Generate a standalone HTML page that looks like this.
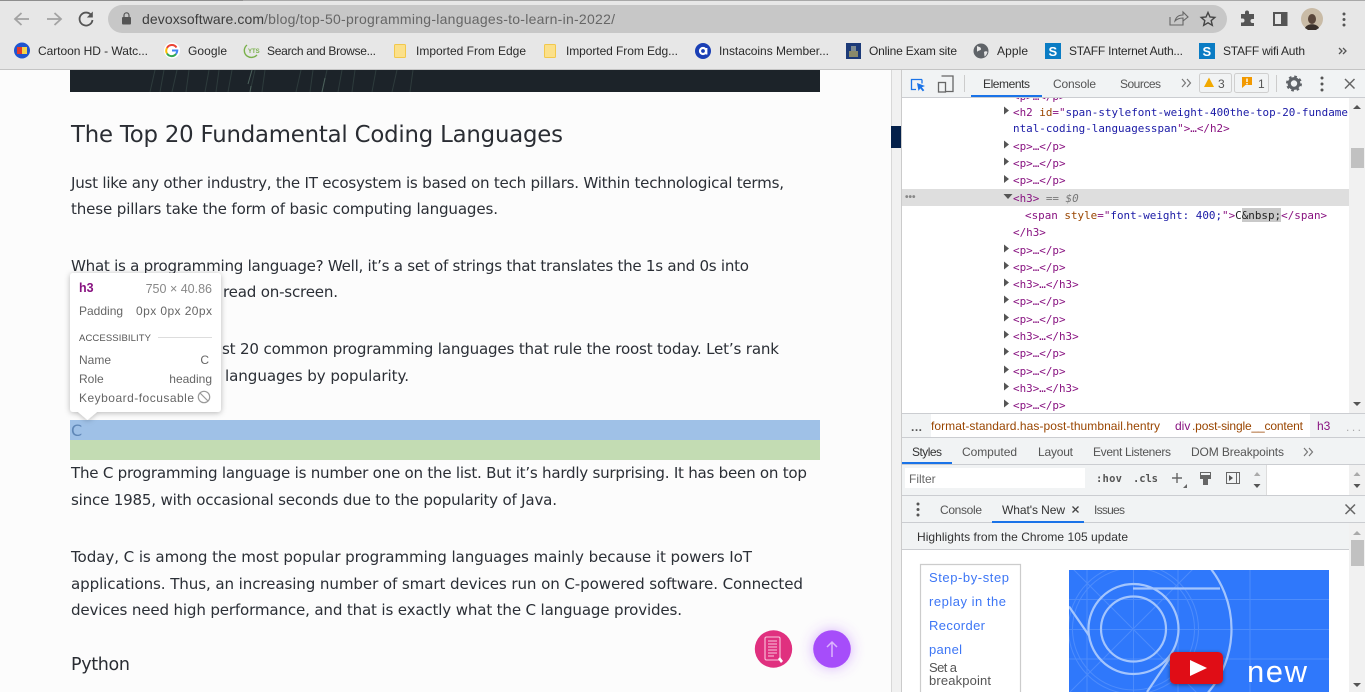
<!DOCTYPE html>
<html lang="en"><head><meta charset="utf-8"><title>DevTools</title>
<style>
html,body{margin:0;padding:0;width:1365px;height:692px;overflow:hidden;background:#fcfcfc}
svg{display:block;position:absolute;left:0;top:0;overflow:hidden}
text{font-family:"Liberation Sans",Arial,sans-serif;white-space:pre}
.p{font-family:"DejaVu Sans",sans-serif;font-size:15.1px;fill:#2b2f36}
.h{font-family:"DejaVu Sans",sans-serif;fill:#2a2d33}
.b{font-size:12px;fill:#2a2a2a}
.t{font-size:12px;fill:#555}
.m{font-family:"DejaVu Sans Mono",monospace;font-size:10.91px;fill:#881280}
.a{fill:#994500}.v{fill:#1a1aa6}.k{fill:#222}.g{fill:#777;font-style:italic}
.tt{font-size:12px;fill:#666}
</style></head><body>
<svg width="1365" height="692" viewBox="0 0 1365 692" xmlns="http://www.w3.org/2000/svg">
<defs>
<filter id="sh" x="-20%" y="-20%" width="140%" height="140%"><feDropShadow dx="0" dy="1" stdDeviation="3" flood-color="#000" flood-opacity=".28"/></filter>
<filter id="gl" x="-60%" y="-60%" width="220%" height="220%"><feDropShadow dx="0" dy="0" stdDeviation="7" flood-color="#a64dfa" flood-opacity=".45"/></filter>
<filter id="sh2" x="-20%" y="-20%" width="140%" height="140%"><feDropShadow dx="0" dy="1" stdDeviation="2" flood-color="#111" flood-opacity=".45"/></filter>
<clipPath id="elc"><rect x="902" y="98" width="447" height="314"/></clipPath>
<clipPath id="imgc"><rect x="1069" y="570" width="260" height="122"/></clipPath>
<clipPath id="topc"><rect x="70" y="70" width="750" height="22"/></clipPath>
<clipPath id="cardc"><rect x="915" y="560" width="110" height="132"/></clipPath>
</defs>

<!-- page -->
<rect x="0" y="70" width="891" height="622" fill="#fcfcfc"/>
<rect x="70" y="70" width="750" height="22" fill="#1c2329"/>
<g clip-path="url(#topc)" stroke-width="1" opacity=".5">
<path d="M150 92l5-22M160 92l4-22M172 92l5-22M186 92l3-22M205 92l4-22M216 92l3-22M228 92l4-22M250 92l5-22M262 92l3-22M296 92l5-22M310 92l3-22M322 92l5-22M338 92l4-22M352 92l3-22M372 92l4-22M392 92l5-22M410 92l3-22" stroke="#3f534f" fill="none"/>
<path d="M248 84l4-14M322 92l3-14M250 92l1-6" stroke="#7d9f8e" fill="none"/>
</g>

<text class="h" x="71" y="142" font-size="22.8" textLength="492" lengthAdjust="spacing">The Top 20 Fundamental Coding Languages</text>

<text class="p" x="71" y="188" textLength="713" lengthAdjust="spacing">Just like any other industry, the IT ecosystem is based on tech pillars. Within technological terms,</text>
<text class="p" x="71" y="214" textLength="427" lengthAdjust="spacing">these pillars take the form of basic computing languages.</text>
<text class="p" x="71" y="271" textLength="678" lengthAdjust="spacing">What is a programming language? Well, it’s a set of strings that translates the 1s and 0s into</text>
<text class="p" x="223" y="297" textLength="115" lengthAdjust="spacing">read on-screen.</text>
<text class="p" x="222" y="354" textLength="557" lengthAdjust="spacing">st 20 common programming languages that rule the roost today. Let’s rank</text>
<text class="p" x="225" y="381" textLength="184" lengthAdjust="spacing">languages by popularity.</text>

<rect x="70" y="420" width="750" height="20" fill="#9fc1e7"/>
<rect x="70" y="440" width="750" height="20" fill="#c3dcb3"/>
<text class="h" x="71" y="436" font-size="16" style="fill:#5f87b7">C</text>

<text class="p" x="71" y="478" textLength="736" lengthAdjust="spacing">The C programming language is number one on the list. But it’s hardly surprising. It has been on top</text>
<text class="p" x="71" y="505" textLength="486" lengthAdjust="spacing">since 1985, with occasional seconds due to the popularity of Java.</text>
<text class="p" x="71" y="562" textLength="681" lengthAdjust="spacing">Today, C is among the most popular programming languages mainly because it powers IoT</text>
<text class="p" x="71" y="589" textLength="732" lengthAdjust="spacing">applications. Thus, an increasing number of smart devices run on C-powered software. Connected</text>
<text class="p" x="71" y="615" textLength="611" lengthAdjust="spacing">devices need high performance, and that is exactly what the C language provides.</text>
<text class="h" x="71" y="670" font-size="17.5" textLength="59" lengthAdjust="spacing">Python</text>

<!-- tooltip -->
<g filter="url(#sh)"><rect x="70" y="273" width="151" height="139" rx="3" fill="#fff"/><path d="M78 412h19l-9.500 8z" fill="#fff"/></g>
<text x="79" y="292" font-size="12.5" font-weight="bold" fill="#881280">h3</text>
<text x="212" y="293" font-size="12.5" fill="#888" text-anchor="end">750 × 40.86</text>
<text x="79" y="315" class="tt">Padding</text>
<text x="212" y="315" class="tt" text-anchor="end" textLength="76" lengthAdjust="spacing">0px 0px 20px</text>
<text x="79" y="341" font-size="9.500" fill="#555" textLength="72" lengthAdjust="spacing">ACCESSIBILITY</text>
<rect x="158" y="337" width="54" height="1" fill="#ddd"/>
<text x="79" y="364" class="tt">Name</text><text x="209" y="364" class="tt" text-anchor="end">C</text>
<text x="79" y="383" class="tt">Role</text><text x="212" y="383" class="tt" text-anchor="end">heading</text>
<text x="79" y="402" class="tt" textLength="115" lengthAdjust="spacing">Keyboard-focusable</text>
<circle cx="204" cy="397" r="5.700" fill="none" stroke="#999" stroke-width="1.200"/><path d="M200 393l8 8" stroke="#999" stroke-width="1.200"/>

<!-- FABs -->
<circle cx="773.500" cy="649" r="18.700" fill="#e0307f"/>
<g fill="none" stroke="#f9c6dd" stroke-width="1.100">
<rect x="765" y="637" width="15" height="23" rx="1.500"/>
<path d="M768 641h9M768 644h9M768 647h9M768 650h9M768 653h9M768 656h6"/>
</g>
<path d="M780 657l3 4-2 2-3-4z" fill="#fff"/>
<circle cx="832" cy="649" r="18.800" fill="#a64dfa" filter="url(#gl)"/>
<path d="M832 657v-15M827 647l5-5 5 5" fill="none" stroke="#dcb5fd" stroke-width="1.500"/>

<!-- chrome top -->
<rect x="0" y="0" width="1365" height="70" fill="#e7e7e7"/>
<rect x="0" y="0" width="243" height="1" fill="#8e8e8e"/>
<rect x="243" y="0" width="1122" height="1" fill="#a8a8a8"/>
<rect x="0" y="69" width="1365" height="1" fill="#c4c4c4"/>
<rect x="108" y="5" width="1119" height="28" rx="14" fill="#c7c7c7"/>
<path d="M29 19H15.500M21.500 13l-6.500 6 6.500 6" fill="none" stroke="#a3a3a3" stroke-width="1.800"/>
<path d="M47 19h13.500M54.500 13l6.500 6-6.500 6" fill="none" stroke="#a3a3a3" stroke-width="1.800"/>
<path d="M91.500 15.500A6.500 6.500 0 1 0 92.500 20" fill="none" stroke="#555" stroke-width="1.800"/><path d="M92.800 11.500v6h-6z" fill="#555"/>
<rect x="122" y="17" width="9" height="7.500" rx="1" fill="#555"/><path d="M124 17v-1.700a2.500 2.500 0 0 1 5 0V17" fill="none" stroke="#555" stroke-width="1.200"/>
<text x="142" y="24" font-size="14" fill="#3c3c3c" textLength="122" lengthAdjust="spacing">devoxsoftware.com</text>
<text x="264" y="24" font-size="14" fill="#666" textLength="351" lengthAdjust="spacing">/blog/top-50-programming-languages-to-learn-in-2022/</text>
<path d="M1170 17v8h13v-4M1175 21c1-4 4-6 8-6v-3l5 5-5 4v-3c-3 0-6 1-8 3z" fill="none" stroke="#666" stroke-width="1.100"/>
<path d="M1208 12.500l2 4.500 4.800.4-3.600 3.200 1.100 4.700-4.300-2.500-4.300 2.500 1.100-4.700-3.600-3.200 4.800-.4z" fill="none" stroke="#444" stroke-width="1.400"/>
<path d="M1241 14h4v-1.500a2 2 0 0 1 4 0V14h5v5h-1.500a2 2 0 0 0 0 4H1254v3h-13v-3.500h1.500a2 2 0 0 0 0-4H1241z" fill="#555"/>
<rect x="1274" y="13" width="12.500" height="12" fill="#e7e7e7" stroke="#555" stroke-width="2"/><rect x="1281" y="13" width="5.500" height="12" fill="#555"/>
<circle cx="1312" cy="19" r="11" fill="#c9bba6"/><ellipse cx="1312" cy="19" rx="4" ry="5" fill="#5a463a"/><path d="M1305 28c2-5 12-5 14 0l-3 2h-8z" fill="#3a302a"/>
<circle cx="1344" cy="14" r="1.500" fill="#555"/><circle cx="1344" cy="19.500" r="1.500" fill="#555"/><circle cx="1344" cy="25" r="1.500" fill="#555"/>

<!-- bookmarks -->
<circle cx="22" cy="50.500" r="8" fill="#1f55d0"/><rect x="17" y="47" width="5" height="7" fill="#e03a2f"/><rect x="22" y="47" width="5" height="7" fill="#f3d54a"/>
<text class="b" x="38" y="55" textLength="110" lengthAdjust="spacing">Cartoon HD - Watc...</text>
<circle cx="172" cy="50.500" r="8" fill="#fff"/>
<path d="M176.500 47.500A5.500 5.500 0 0 0 167 48" fill="none" stroke="#ea4335" stroke-width="2"/><path d="M167 48a5.500 5.500 0 0 0 0 5.500" fill="none" stroke="#fbbc05" stroke-width="2"/><path d="M167 53.500a5.500 5.500 0 0 0 9 .5" fill="none" stroke="#34a853" stroke-width="2"/><path d="M172 50.500h5.300a5.500 5.500 0 0 1-1.300 3.500" fill="none" stroke="#4285f4" stroke-width="2"/>
<text class="b" x="188" y="55" textLength="39" lengthAdjust="spacing">Google</text>
<path d="M247 45a7 7 0 0 0 0 11c3 2 7 2 10-1" fill="none" stroke="#79b04a" stroke-width="1.400"/><text x="248" y="53" font-size="6" font-weight="bold" fill="#79b04a">YTS</text>
<text class="b" x="267" y="55" textLength="109" lengthAdjust="spacing">Search and Browse...</text>
<rect x="394.500" y="44.500" width="11" height="13" rx="1" fill="#fbe08a" stroke="#f2c84b"/>
<text class="b" x="416" y="55" textLength="110" lengthAdjust="spacing">Imported From Edge</text>
<rect x="544.500" y="44.500" width="11" height="13" rx="1" fill="#fbe08a" stroke="#f2c84b"/>
<text class="b" x="566" y="55" textLength="112" lengthAdjust="spacing">Imported From Edg...</text>
<circle cx="703" cy="51" r="8" fill="#1a3fb5"/><circle cx="703" cy="51" r="3" fill="none" stroke="#fff" stroke-width="2.200"/><path d="M706.500 48v6.500" stroke="#fff" stroke-width="1.800"/>
<text class="b" x="719" y="55" textLength="110" lengthAdjust="spacing">Instacoins Member...</text>
<rect x="846" y="43" width="15" height="16" fill="#1c3a78"/><rect x="851" y="46" width="5" height="5" fill="#7d8a90"/><rect x="849" y="51" width="9" height="6" fill="#8a8a6a"/>
<text class="b" x="869" y="55" textLength="88" lengthAdjust="spacing">Online Exam site</text>
<circle cx="981" cy="51" r="7.500" fill="#5f6368"/><path d="M977 46c2 1 4 1 4 3s-3 1-4 3M984 52c1-1 3-1 3.500 0-1 3-2 4-3 4.500z" fill="#e7e7e7"/>
<text class="b" x="997" y="55" textLength="31" lengthAdjust="spacing">Apple</text>
<rect x="1045" y="43" width="16" height="16" fill="#0a7cc4"/><text x="1048.500" y="56" font-size="13" font-weight="bold" fill="#fff">S</text>
<text class="b" x="1069" y="55" textLength="114" lengthAdjust="spacing">STAFF Internet Auth...</text>
<rect x="1199" y="43" width="16" height="16" fill="#0a7cc4"/><text x="1202.500" y="56" font-size="13" font-weight="bold" fill="#fff">S</text>
<text class="b" x="1223" y="55" textLength="82" lengthAdjust="spacing">STAFF wifi Auth</text>
<path d="M1339 48l3 3-3 3M1343 48l3 3-3 3" fill="none" stroke="#555" stroke-width="1.300"/>

<!-- gutter -->
<rect x="891" y="70" width="11" height="622" fill="#f1f1f1"/>
<rect x="891" y="70" width="1" height="622" fill="#d8d8d8"/>
<rect x="901" y="70" width="1" height="622" fill="#cbcbcb"/>
<rect x="891" y="126" width="10" height="22" fill="#04204a"/>

<!-- devtools base -->
<rect x="902" y="70" width="463" height="622" fill="#fff"/>
<rect x="902" y="70" width="463" height="27" fill="#f1f3f4"/>
<rect x="902" y="97" width="463" height="1" fill="#cbcdd1"/>
<path d="M922 79.500h-10.500v10H916" fill="none" stroke="#1a73e8" stroke-width="1.300"/><path d="M922 79.500v4" stroke="#1a73e8" stroke-width="1.300"/>
<path d="M917 83l8 3-3.200 1.200 2.500 3-1.500 1.200-2.500-3-1.800 2.600z" fill="#1a73e8"/>
<path d="M941.500 76h11.500v15.500h-7" fill="none" stroke="#666" stroke-width="1.300"/><rect x="938.500" y="82.500" width="7" height="9.500" fill="none" stroke="#666" stroke-width="1.300"/>
<rect x="964" y="75" width="1" height="17" fill="#ccc"/>
<text class="t" x="983" y="88" textLength="47" lengthAdjust="spacing" style="fill:#333">Elements</text>
<rect x="971" y="95" width="71" height="2" fill="#1a73e8"/>
<text class="t" x="1053" y="88" textLength="43" lengthAdjust="spacing">Console</text>
<text class="t" x="1120" y="88" textLength="41" lengthAdjust="spacing">Sources</text>
<path d="M1182 79l3.500 4-3.500 4M1187 79l3.500 4-3.500 4" fill="none" stroke="#777" stroke-width="1.200"/>
<rect x="1199.500" y="73.500" width="32" height="19" rx="2" fill="#f1f3f4" stroke="#cfcfcf"/>
<path d="M1209 77.500l5 9.500h-10z" fill="#f2a900"/><text x="1218" y="88" font-size="12" fill="#555">3</text>
<rect x="1234.500" y="73.500" width="34" height="19" rx="2" fill="#f1f3f4" stroke="#cfcfcf"/>
<path d="M1242 77h10v8h-6.500l-3.500 3z" fill="#f29900"/><rect x="1246.300" y="78.500" width="1.400" height="3.500" fill="#fff"/><rect x="1246.300" y="83" width="1.400" height="1.400" fill="#fff"/>
<text x="1258" y="88" font-size="12" fill="#555">1</text>
<rect x="1276" y="75" width="1" height="17" fill="#ccc"/>
<circle cx="1294" cy="83.500" r="4.800" fill="none" stroke="#5f6368" stroke-width="3.200"/><circle cx="1294" cy="83.500" r="7" fill="none" stroke="#5f6368" stroke-width="2" stroke-dasharray="2.700 2.800"/>
<circle cx="1322" cy="78" r="1.500" fill="#555"/><circle cx="1322" cy="84" r="1.500" fill="#555"/><circle cx="1322" cy="90" r="1.500" fill="#555"/>
<path d="M1345 79l9.500 9.500M1354.500 79l-9.500 9.500" stroke="#666" stroke-width="1.500"/>

<!-- elements -->
<rect x="1349" y="98" width="16" height="315" fill="#f1f1f1"/>
<rect x="1351" y="148" width="13" height="20" fill="#c1c1c1"/>
<path d="M1353 109l4-4 4 4z" fill="#555"/><path d="M1353 402l4 4 4-4z" fill="#555"/>
<g clip-path="url(#elc)">
<rect x="902" y="189" width="447" height="17" fill="#dedede"/>
<rect x="1242" y="208" width="39" height="14" fill="#c9c9c9"/>
<text class="m" x="1013" y="100">&lt;p&gt;…&lt;/p&gt;</text>
<g fill="#555">
<path d="M1004 106.500l5 4-5 4zM1004 140.500l5 4-5 4zM1004 157.500l5 4-5 4zM1004 175l5 4-5 4zM1004 244.500l5 4-5 4zM1004 261.500l5 4-5 4zM1004 278.500l5 4-5 4zM1004 295.500l5 4-5 4zM1004 313.500l5 4-5 4zM1004 330.500l5 4-5 4zM1004 347.500l5 4-5 4zM1004 365.500l5 4-5 4zM1004 382.500l5 4-5 4zM1004 399.500l5 4-5 4z"/>
<path d="M1003.500 194h9l-4.500 5z"/>
</g>
<text class="m" x="1013" y="116">&lt;h2 <tspan class="a">id</tspan>="<tspan class="v">span-stylefont-weight-400the-top-20-fundame</tspan></text>
<text class="m" x="1013" y="132"><tspan class="v">ntal-coding-languagesspan</tspan>"&gt;…&lt;/h2&gt;</text>
<text class="m" x="1013" y="150">&lt;p&gt;…&lt;/p&gt;</text>
<text class="m" x="1013" y="167">&lt;p&gt;…&lt;/p&gt;</text>
<text class="m" x="1013" y="184">&lt;p&gt;…&lt;/p&gt;</text>
<text class="m" x="1013" y="202">&lt;h3&gt; <tspan class="g">== $0</tspan></text>
<text x="905" y="200" font-size="10" font-weight="bold" fill="#888">•••</text>
<text class="m" x="1025" y="219">&lt;span <tspan class="a">style</tspan>="<tspan class="v">font-weight: 400;</tspan>"&gt;<tspan class="k">C&amp;nbsp;</tspan>&lt;/span&gt;</text>
<text class="m" x="1013" y="236">&lt;/h3&gt;</text>
<text class="m" x="1013" y="254">&lt;p&gt;…&lt;/p&gt;</text>
<text class="m" x="1013" y="271">&lt;p&gt;…&lt;/p&gt;</text>
<text class="m" x="1013" y="288">&lt;h3&gt;…&lt;/h3&gt;</text>
<text class="m" x="1013" y="305">&lt;p&gt;…&lt;/p&gt;</text>
<text class="m" x="1013" y="323">&lt;p&gt;…&lt;/p&gt;</text>
<text class="m" x="1013" y="340">&lt;h3&gt;…&lt;/h3&gt;</text>
<text class="m" x="1013" y="357">&lt;p&gt;…&lt;/p&gt;</text>
<text class="m" x="1013" y="375">&lt;p&gt;…&lt;/p&gt;</text>
<text class="m" x="1013" y="392">&lt;h3&gt;…&lt;/h3&gt;</text>
<text class="m" x="1013" y="409">&lt;p&gt;…&lt;/p&gt;</text>
</g>

<!-- breadcrumb -->
<rect x="902" y="413" width="463" height="1" fill="#cbcdd1"/>
<rect x="902" y="414" width="29" height="23" fill="#f1f3f4"/>
<rect x="1310" y="414" width="55" height="23" fill="#f1f3f4"/>
<rect x="902" y="437" width="463" height="1" fill="#cbcdd1"/>
<text x="911" y="431" font-size="12" font-weight="bold" fill="#555" textLength="11" lengthAdjust="spacing">...</text>
<text x="931" y="430" font-size="12" fill="#994500" textLength="229" lengthAdjust="spacing">format-standard.has-post-thumbnail.hentry</text>
<text x="1175" y="430" font-size="12" fill="#881280">div</text>
<text x="1192" y="430" font-size="12" fill="#994500" textLength="111" lengthAdjust="spacing">.post-single__content</text>
<text x="1317" y="430" font-size="12" fill="#881280">h3</text>
<text x="1346" y="431" font-size="12" fill="#aaa" textLength="15" lengthAdjust="spacing">...</text>

<!-- styles tabs -->
<rect x="902" y="438" width="463" height="26" fill="#f1f3f4"/>
<rect x="902" y="464" width="463" height="1" fill="#cbcdd1"/>
<text class="t" x="912" y="456" textLength="30" lengthAdjust="spacing" style="fill:#333">Styles</text>
<rect x="902" y="462" width="50" height="2" fill="#1a73e8"/>
<text class="t" x="962" y="456" textLength="55" lengthAdjust="spacing">Computed</text>
<text class="t" x="1038" y="456" textLength="35" lengthAdjust="spacing">Layout</text>
<text class="t" x="1093" y="456" textLength="78" lengthAdjust="spacing">Event Listeners</text>
<text class="t" x="1191" y="456" textLength="93" lengthAdjust="spacing">DOM Breakpoints</text>
<path d="M1304 448l3.500 4-3.500 4M1309 448l3.500 4-3.500 4" fill="none" stroke="#777" stroke-width="1.200"/>

<!-- filter -->
<rect x="902" y="465" width="365" height="30" fill="#f1f3f4"/>
<rect x="905" y="468" width="180" height="20" fill="#fff"/>
<text x="909" y="483" font-size="12" fill="#666">Filter</text>
<text x="1096" y="482" font-size="10.500" font-weight="bold" fill="#555" style="font-family:'DejaVu Sans Mono',monospace" textLength="26" lengthAdjust="spacing">:hov</text>
<text x="1133" y="482" font-size="10.500" font-weight="bold" fill="#555" style="font-family:'DejaVu Sans Mono',monospace" textLength="25" lengthAdjust="spacing">.cls</text>
<path d="M1177 473v10M1172 478h10" stroke="#666" stroke-width="1.400"/><path d="M1187 488h-4l4-4z" fill="#666"/>
<rect x="1200" y="472" width="11" height="7" fill="#666"/><rect x="1201" y="473" width="9" height="2" fill="#f1f3f4"/><rect x="1203" y="479" width="5" height="6" fill="#666"/>
<rect x="1226.500" y="472.500" width="13" height="11" fill="none" stroke="#666"/><path d="M1236.500 472.500v11" stroke="#666"/><path d="M1229 475l4 3-4 3z" fill="#555"/>
<path d="M1254 476l3-4 3.500 4z" fill="#aaa"/><path d="M1253.500 484h7l-3.500 4z" fill="#555"/>
<rect x="1249" y="488" width="17" height="7" fill="#f1f3f4"/>
<rect x="1266" y="465" width="1" height="30" fill="#ddd"/>
<rect x="1349" y="465" width="16" height="30" fill="#f1f1f1"/>
<path d="M1353.500 476l3.500-4 3.500 4z" fill="#aaa"/><path d="M1353.500 484h7l-3.500 4z" fill="#555"/>
<rect x="902" y="495" width="463" height="1" fill="#cbcdd1"/>

<!-- drawer -->
<rect x="902" y="496" width="463" height="26" fill="#f1f3f4"/>
<rect x="902" y="522" width="463" height="1" fill="#cbcdd1"/>
<circle cx="918" cy="504" r="1.500" fill="#555"/><circle cx="918" cy="509.500" r="1.500" fill="#555"/><circle cx="918" cy="515" r="1.500" fill="#555"/>
<text class="t" x="940" y="514" textLength="42" lengthAdjust="spacing">Console</text>
<text class="t" x="1002" y="514" textLength="63" lengthAdjust="spacing" style="fill:#333">What's New</text>
<path d="M1072.500 506.500l6 6M1078.500 506.500l-6 6" stroke="#444" stroke-width="1.300"/>
<rect x="992" y="521" width="92" height="2" fill="#1a73e8"/>
<text class="t" x="1094" y="514" textLength="31" lengthAdjust="spacing">Issues</text>
<path d="M1345.500 504.500l9.500 9.500M1355 504.500l-9.500 9.500" stroke="#666" stroke-width="1.500"/>
<rect x="902" y="523" width="447" height="26" fill="#f1f3f4"/>
<rect x="902" y="549" width="447" height="1" fill="#cbcdd1"/>
<text x="917" y="541" font-size="12" fill="#333" textLength="211" lengthAdjust="spacing">Highlights from the Chrome 105 update</text>
<rect x="1349" y="523" width="16" height="169" fill="#f1f1f1"/>
<rect x="1351" y="540" width="13" height="26" fill="#c1c1c1"/>
<path d="M1353 535l4-4 4 4z" fill="#aaa"/><path d="M1353 683l4 4 4-4z" fill="#555"/>

<!-- what's new card -->
<path d="M920.500 692V564.500h100V692" fill="#fff" stroke="#ccc" stroke-width="1.200"/>
<g font-size="13" fill="#3d76f5">
<text x="929" y="582" textLength="80" lengthAdjust="spacing">Step-by-step</text>
<text x="929" y="606" textLength="77" lengthAdjust="spacing">replay in the</text>
<text x="929" y="630" textLength="56" lengthAdjust="spacing">Recorder</text>
<text x="929" y="654" textLength="33" lengthAdjust="spacing">panel</text>
</g>
<g font-size="13" fill="#555">
<text x="929" y="672" textLength="28" lengthAdjust="spacing">Set a</text>
<text x="929" y="685" textLength="62" lengthAdjust="spacing">breakpoint</text>
</g>

<!-- video thumbnail -->
<rect x="1069" y="570" width="260" height="122" fill="#2f78fb"/>
<g clip-path="url(#imgc)" fill="none">
<g stroke="#5b95fc" stroke-width="1" opacity=".7">
<path d="M1069 599.500h260M1069 629.500h260M1069 659h260M1087 570v122M1133.500 570v122M1178 570v122M1250 570v122"/>
<path d="M1069 565l130 130M1069 693l130-130"/>
<circle cx="1133.500" cy="629" r="61"/><circle cx="1133.500" cy="629" r="65"/>
</g>
<g stroke="#a3c5fd" stroke-width="2.200">
<circle cx="1133.500" cy="629" r="32.500"/>
<circle cx="1133.500" cy="629" r="45"/>
<circle cx="1133.500" cy="629" r="98"/>
<path d="M1133 588.500h87M1069 606.500l20 29M1147 692l25-37"/>
</g>
</g>
<rect x="1170" y="652" width="53" height="32" rx="5" fill="#e01019" filter="url(#sh2)"/>
<path d="M1190 660v16l17-8z" fill="#fff"/>
<text x="1247" y="682" font-size="31" fill="#fff" textLength="60" lengthAdjust="spacing">new</text>
</svg>
</body></html>
